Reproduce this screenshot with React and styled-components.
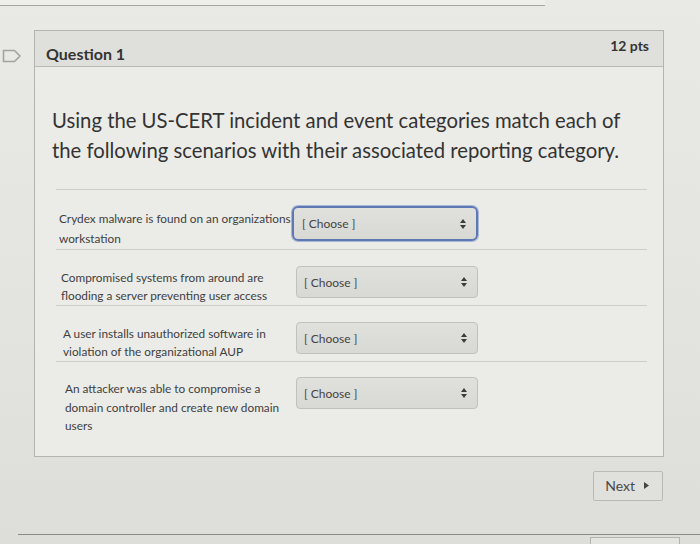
import React from "react";
import styled, { createGlobalStyle } from "styled-components";

const GlobalStyle = createGlobalStyle`
  body {
    margin: 0;
    background: #e3e3e0;
    font-family: Lato, "Noto Sans", sans-serif;
    color: #3b3b3b;
  }
`;

const Page = styled.div`
  width: 700px;
  height: 544px;
  overflow: hidden;
  background: linear-gradient(180deg, #e9e9e6 0%, #e3e3e0 60%, #dddddA 100%);
`;

const TopStrip = styled.div`
  width: 545px;
  height: 5px;
  background: #eeeeeb;
  border-bottom: 1px solid #a5a5a2;
`;

const Main = styled.div`
  display: flex;
  align-items: flex-start;
  margin-top: 24px;
`;

const FlagCol = styled.div`
  width: 34px;
  padding: 17px 0 0 2px;
  box-sizing: border-box;
`;

const Column = styled.div`
  width: 630px;
`;

const Card = styled.div`
  border: 1px solid #b3b3b0;
  background: #ebebe8;
`;

const Header = styled.div`
  height: 35px;
  display: flex;
  justify-content: space-between;
  align-items: center;
  padding: 0 14px 0 11px;
  background: #dfdfdb;
  border-bottom: 1px solid #b8b8b5;
`;

const Title = styled.span`
  font-size: ${(p) => p.size}px;
  font-weight: 700;
  color: #343434;
  margin-top: ${(p) => p.shift}px;
`;

const Body = styled.div`
  padding: 38px 16px 20px 17px;
`;

const Prompt = styled.p`
  max-width: 585px;
  margin: 0 0 24px;
  font-size: 20.3px;
  line-height: 30px;
  color: #333;
`;

const Rows = styled.div`
  margin-left: 4px;
`;

const Row = styled.div`
  display: flex;
  align-items: flex-start;
  padding: ${(p) => p.pad}px 0 0 ${(p) => p.indent}px;
  border-top: 1px solid #cdcdca;
`;

const Label = styled.div`
  width: ${(p) => 236 - p.indent}px;
  box-sizing: border-box;
  padding-right: ${(p) => p.trim}px;
  margin-top: 3px;
  font-size: 11.8px;
  line-height: ${(p) => p.lh}px;
  color: #3f3f3f;
`;

const Select = styled.div`
  width: ${(p) => (p.focused ? 186 : 182)}px;
  height: ${(p) => (p.focused ? 35 : 32)}px;
  margin-left: ${(p) => (p.focused ? 0 : 4)}px;
  box-sizing: border-box;
  display: flex;
  align-items: center;
  justify-content: space-between;
  padding: 0 10px 0 ${(p) => (p.focused ? 8 : 7)}px;
  border-radius: ${(p) => (p.focused ? 6 : 4)}px;
  background: linear-gradient(180deg, #e0e0dd 0%, #d8d8d5 100%);
  border: ${(p) => (p.focused ? "2px solid #5d78b3" : "1px solid #c0c0bd")};
  box-shadow: ${(p) => (p.focused ? "0 0 0 1px #a7b6d6" : "none")};
  font-size: 12px;
  color: #444;
`;

const Footer = styled.div`
  display: flex;
  justify-content: flex-end;
  margin-top: 14px;
  padding-right: 1px;
`;

const NextButton = styled.button`
  display: flex;
  align-items: center;
  gap: 9px;
  height: 30px;
  padding: 0 13px 0 11px;
  background: #e0e0dd;
  border: 1px solid #b9b9b6;
  border-radius: 2px;
  font-family: Lato, "Noto Sans", sans-serif;
  font-size: 14px;
  color: #4a4a4a;
`;

const BottomBar = styled.div`
  display: flex;
  justify-content: flex-end;
  margin: 33px 0 0 18px;
  border-top: 1px solid #8a8a87;
  height: 20px;
`;

const BottomBox = styled.div`
  width: 88px;
  margin: 2px 20px 0 0;
  border: 1px solid #b3b3b0;
  border-bottom: none;
  background: #e4e4e1;
`;

const Flag = () => (
  <svg width="20" height="14" viewBox="0 0 20 14">
    <path
      d="M1.5 1.5 H12.5 L18 7 L12.5 12.5 H1.5 Z"
      fill="none"
      stroke="#a2a2a0"
      strokeWidth="1.6"
      strokeLinejoin="round"
    />
  </svg>
);

const Arrows = () => (
  <svg width="6" height="10" viewBox="0 0 6 10">
    <path d="M3 0 L6 4 H0 Z" fill="#3c3c3c" />
    <path d="M3 10 L6 6 H0 Z" fill="#3c3c3c" />
  </svg>
);

const Caret = () => (
  <svg width="5" height="7" viewBox="0 0 5 7">
    <path d="M0 0 L5 3.5 L0 7 Z" fill="#444" />
  </svg>
);

const scenarios = [
  { text: "Crydex malware is found on an organizations workstation", focused: true, pad: 16, lh: 20, indent: 3, trim: 0 },
  { text: "Compromised systems from around are flooding a server preventing user access", pad: 16, lh: 18, indent: 5, trim: 0 },
  { text: "A user installs unauthorized software in violation of the organizational AUP", pad: 16, lh: 18, indent: 7, trim: 0 },
  { text: "An attacker was able to compromise a domain controller and create new domain users", pad: 15, lh: 18.5, indent: 9, trim: 8 },
];

const App = () => {
  return (
    <Page>
      <GlobalStyle />
      <TopStrip />
      <Main>
        <FlagCol>
          <Flag />
        </FlagCol>
        <Column>
          <Card>
            <Header>
              <Title size={16} shift={9}>Question 1</Title>
              <Title size={14} shift={-6}>12 pts</Title>
            </Header>
            <Body>
              <Prompt>
                Using the US-CERT incident and event categories match each of
                the following scenarios with their associated reporting category.
              </Prompt>
              <Rows>
                {scenarios.map((s) => (
                  <Row key={s.text} pad={s.pad} indent={s.indent}>
                    <Label lh={s.lh} indent={s.indent} trim={s.trim}>
                      {s.text}
                    </Label>
                    <Select focused={s.focused}>
                      <span>[ Choose ]</span>
                      <Arrows />
                    </Select>
                  </Row>
                ))}
              </Rows>
            </Body>
          </Card>
          <Footer>
            <NextButton>
              Next <Caret />
            </NextButton>
          </Footer>
        </Column>
      </Main>
      <BottomBar>
        <BottomBox />
      </BottomBar>
    </Page>
  );
};

export default App;
